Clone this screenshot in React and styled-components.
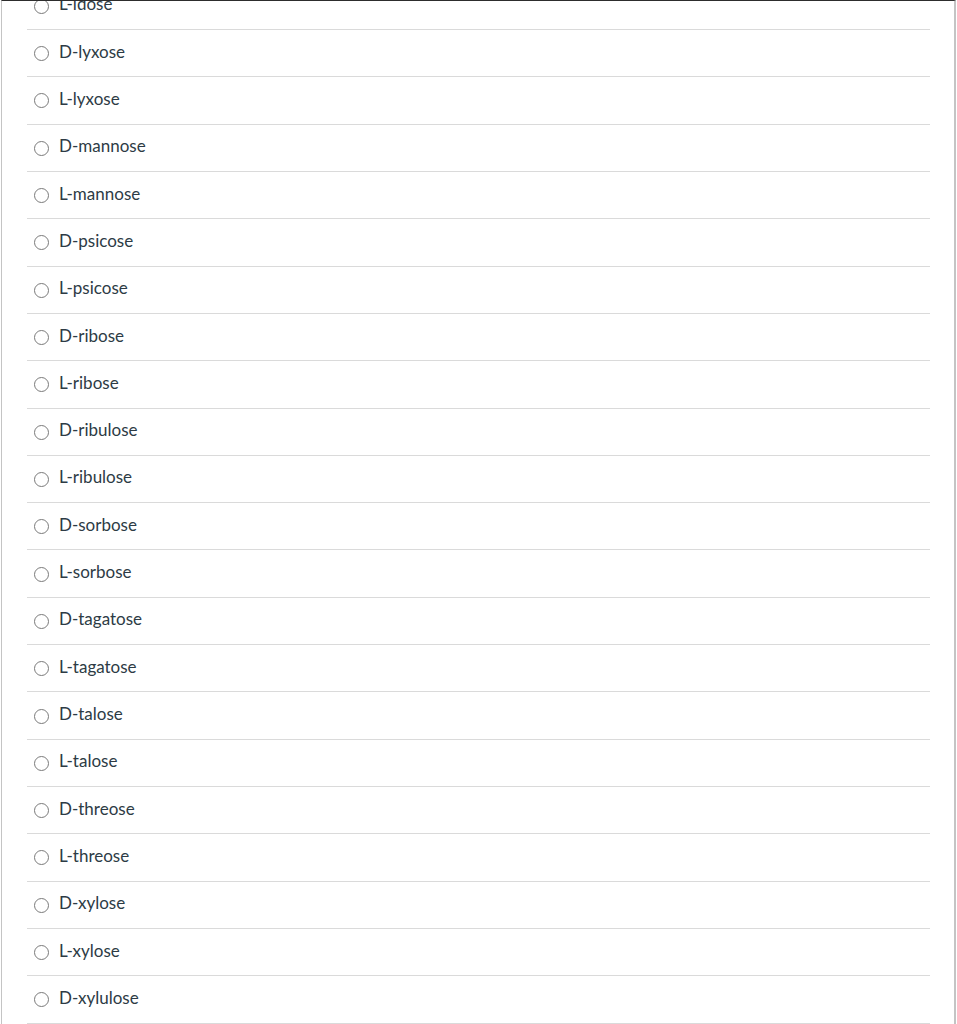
import React from 'react';
import styled, { createGlobalStyle } from 'styled-components';

const GlobalStyle = createGlobalStyle`
  html, body {
    margin: 0;
    padding: 0;
    background: #fff;
  }
  body {
    font-family: Lato, "Open Sans", "Liberation Sans", sans-serif;
    color: #2d3b45;
  }
`;

const Frame = styled.div`
  margin-left: 1px;
  width: 952px;
  height: 1023px;
  border-top: 1px solid #2d2d2d;
  border-left: 1px solid #c4c4c4;
  border-right: 2px solid #c4c4c4;
  overflow: hidden;
`;

const AnswerList = styled.ul`
  list-style: none;
  margin: -18.3px 0 0 0;
  padding: 0 24px 0 25px;
`;

const Answer = styled.li`
  box-sizing: border-box;
  height: 47.32px;
  display: flex;
  align-items: center;
  padding-left: 7px;
  border-bottom: 1px solid #dadada;
`;

const Radio = styled.span`
  box-sizing: border-box;
  width: 15px;
  height: 15px;
  flex: none;
  border-radius: 50%;
  border: 1px solid #7a7a7a;
  background: #fff;
  margin-right: 10px;
  margin-top: 1px;
`;

const Label = styled.span`
  font-size: 17px;
  line-height: 24px;
  margin-bottom: 3px;
  color: #2d3b45;
`;

const sugars = [
  'L-idose', 'D-lyxose', 'L-lyxose', 'D-mannose', 'L-mannose', 'D-psicose',
  'L-psicose', 'D-ribose', 'L-ribose', 'D-ribulose', 'L-ribulose', 'D-sorbose',
  'L-sorbose', 'D-tagatose', 'L-tagatose', 'D-talose', 'L-talose', 'D-threose',
  'L-threose', 'D-xylose', 'L-xylose', 'D-xylulose',
];

const App = () => {
  return (
    <>
      <GlobalStyle />
      <Frame>
        <AnswerList>
          {sugars.map((name) => (
            <Answer key={name}>
              <Radio />
              <Label>{name}</Label>
            </Answer>
          ))}
        </AnswerList>
      </Frame>
    </>
  );
};

export default App;
